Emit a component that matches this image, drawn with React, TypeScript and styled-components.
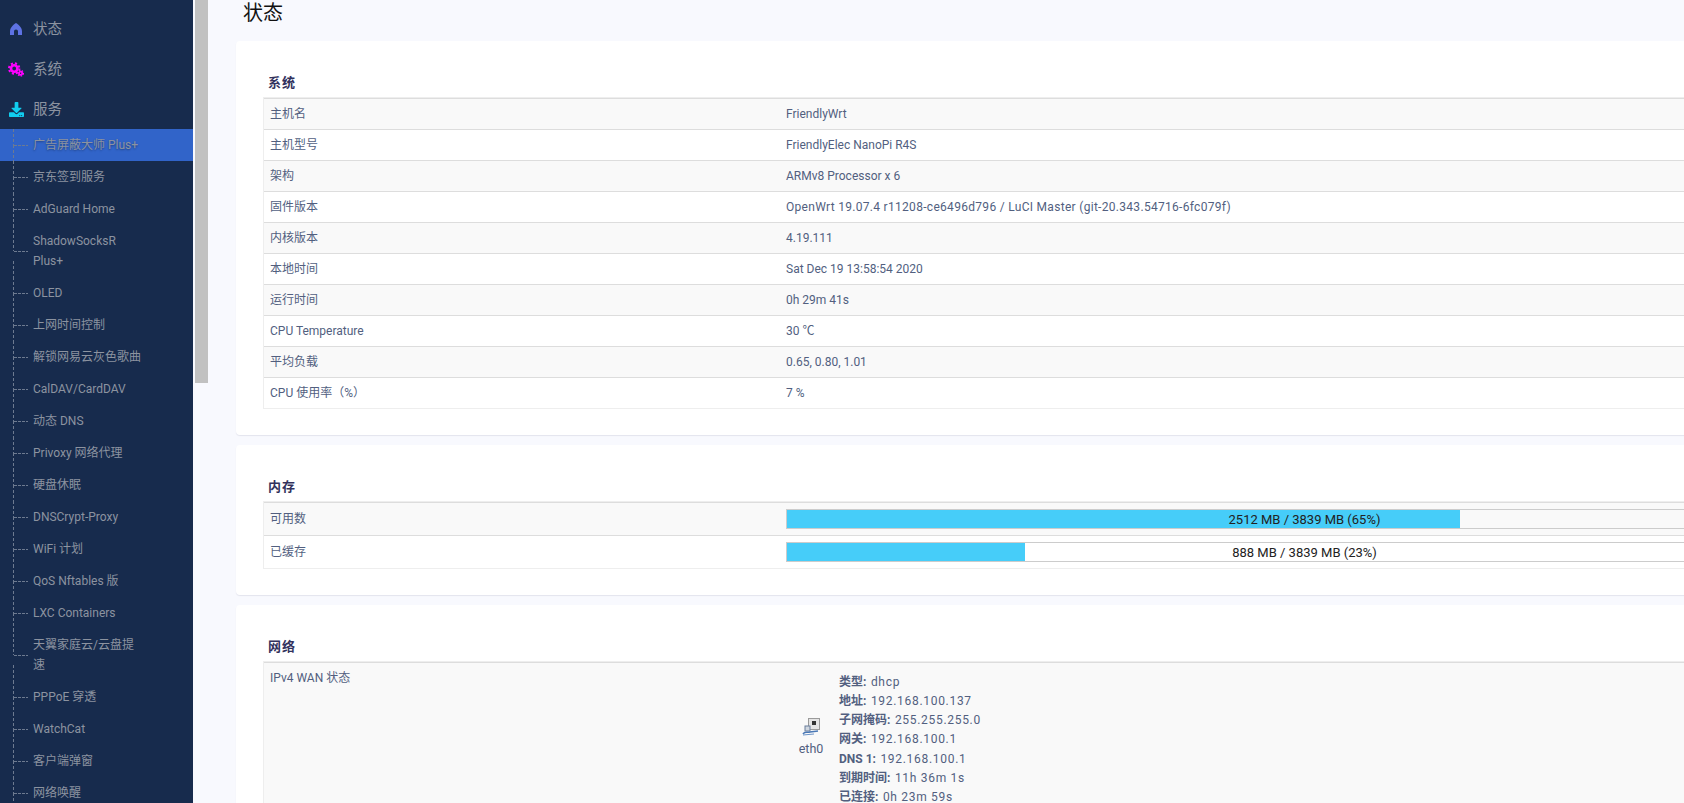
import styled, { createGlobalStyle } from "styled-components";
import { FaDownload } from "react-icons/fa";

const fontStack = `Roboto, "Noto Sans CJK SC", sans-serif`;

const GlobalStyle = createGlobalStyle`
    html, body {
        margin: 0;
        padding: 0;
        overflow: hidden;
        background: #f8f9fe;
    }
`;

const Page = styled.div`
    width: 1684px;
    height: 803px;
    display: flex;
    overflow: hidden;
    font-family: ${fontStack};
    font-size: 12px;
    color: #525f7f;
`;

const Sidebar = styled.nav`
    flex: 0 0 193px;
    box-sizing: border-box;
    padding-top: 9px;
    background: #172b4d;
    overflow: hidden;
`;

const TopItem = styled.div`
    height: 40px;
    display: flex;
    align-items: center;
    padding-left: 8px;
    font-size: 14.5px;
    color: #8c93a0;
`;

const TopIcon = styled.span<{ $color: string }>`
    width: 16px;
    height: 16px;
    margin-right: 9px;
    display: flex;
    align-items: center;
    justify-content: center;
    color: ${props => props.$color};
`;

const TopLabel = styled.span`
    padding-bottom: 3px;
`;

const SubItem = styled.div<{ $active?: boolean }>`
    position: relative;
    box-sizing: border-box;
    padding: 6px 50px 6px 33px;
    line-height: 20px;
    color: #8c93a0;
    background-color: ${props => (props.$active ? "#3164c9" : "transparent")};
    ${props => props.$active && "text-shadow: 0 1px 2px rgba(0, 0, 0, 0.35);"}
    background-image: repeating-linear-gradient(to bottom, #6d7a90 0 3px, transparent 3px 5px);
    background-size: 1px 16px;
    background-position: 13px bottom;
    background-repeat: no-repeat;

    &::before {
        content: "";
        position: absolute;
        left: 13px;
        top: 0;
        width: 1px;
        height: 50%;
        background: repeating-linear-gradient(to bottom, #6d7a90 0 3px, transparent 3px 5px);
    }

    &::after {
        content: "";
        position: absolute;
        left: 14px;
        top: 50%;
        width: 14px;
        height: 1px;
        background: repeating-linear-gradient(to right, #6d7a90 0 3px, transparent 3px 4px);
    }
`;

const ScrollRail = styled.div`
    flex: 0 0 15px;
    box-sizing: border-box;
    padding-left: 2px;
    background: #f8f9fe;
`;

const ScrollThumb = styled.div`
    width: 13px;
    height: 383px;
    background: #c1c1c1;
`;

const Main = styled.main`
    flex: 0 0 auto;
    width: 1645px;
    box-sizing: border-box;
    padding-left: 28px;
`;

const Title = styled.h2`
    margin: 0;
    height: 41px;
    padding-left: 7px;
    box-sizing: border-box;
    font-size: 20px;
    line-height: 26px;
    font-weight: 400;
    color: #111;
`;

const Card = styled.section`
    width: 1617px;
    box-sizing: border-box;
    margin-bottom: 10px;
    padding: 32px 27px 26px;
    background: #fff;
    border-radius: 4px;
    box-shadow: 0 1px 1px rgba(50, 50, 93, 0.1);
`;

const Legend = styled.h3`
    margin: 0 0 4px 5px;
    font-size: 13px;
    line-height: 20px;
    font-weight: 700;
    letter-spacing: 1px;
    color: #32325d;
`;

const Table = styled.div`
    width: 1563px;
    border-top: 1px solid #eee;
    border-left: 1px solid #eee;
    border-bottom: 1px solid #eee;
`;

const Row = styled.div<{ $height: number; $stripe?: boolean }>`
    display: flex;
    box-sizing: border-box;
    min-height: ${props => props.$height}px;
    align-items: center;
    border-top: 1px solid #ddd;
    line-height: 16px;
    background: ${props => (props.$stripe ? "#f9f9f9" : "#fff")};
`;

const Label = styled.div`
    flex: 0 0 522px;
    box-sizing: border-box;
    padding-left: 6px;
`;

const Value = styled.div<{ $spacing?: number }>`
    flex: 1;
    min-width: 0;
    letter-spacing: ${props => props.$spacing ?? 0}px;
`;

const BarCell = styled.div`
    flex: 1;
    min-width: 0;
`;

const BarTrack = styled.div`
    position: relative;
    width: 1037px;
    height: 20px;
    box-sizing: border-box;
    border: 1px solid #ccc;
    font-size: 13px;
    line-height: 19px;
    text-align: center;
    color: #222;
`;

const BarFill = styled.div`
    position: absolute;
    left: 0;
    top: 0;
    bottom: 0;
    background: #46cdf9;
`;

const BarText = styled.span`
    position: relative;
`;

const NetworkRow = styled.div`
    display: flex;
    min-height: 220px;
    border-top: 1px solid #ddd;
    background: #f9f9f9;
`;

const NetworkLabel = styled(Label)`
    padding-top: 7px;
    line-height: 16px;
`;

const Interface = styled.div`
    flex: 0 0 50px;
    height: 130px;
    margin-top: 9px;
    display: flex;
    flex-direction: column;
    align-items: center;
    justify-content: center;
    gap: 5px;
    font-size: 12.5px;
    line-height: 16px;
`;

const NetworkInfo = styled.div`
    margin: 10px 0 0 3px;
    line-height: 19.15px;
`;

const InfoLine = styled.div``;

const InfoValue = styled.span`
    margin-left: 1.5px;
    letter-spacing: 0.7px;
`;

const sideItems = [
    "广告屏蔽大师 Plus+",
    "京东签到服务",
    "AdGuard Home",
    "ShadowSocksR Plus+",
    "OLED",
    "上网时间控制",
    "解锁网易云灰色歌曲",
    "CalDAV/CardDAV",
    "动态 DNS",
    "Privoxy 网络代理",
    "硬盘休眠",
    "DNSCrypt-Proxy",
    "WiFi 计划",
    "QoS Nftables 版",
    "LXC Containers",
    "天翼家庭云/云盘提速",
    "PPPoE 穿透",
    "WatchCat",
    "客户端弹窗",
    "网络唤醒",
];

const systemRows = [
    { name: "主机名", value: "FriendlyWrt" },
    { name: "主机型号", value: "FriendlyElec NanoPi R4S" },
    { name: "架构", value: "ARMv8 Processor x 6" },
    { name: "固件版本", value: "OpenWrt 19.07.4 r11208-ce6496d796 / LuCI Master (git-20.343.54716-6fc079f)", spacing: 0.3 },
    { name: "内核版本", value: "4.19.111" },
    { name: "本地时间", value: "Sat Dec 19 13:58:54 2020" },
    { name: "运行时间", value: "0h 29m 41s" },
    { name: "CPU Temperature", value: "30 ℃" },
    { name: "平均负载", value: "0.65, 0.80, 1.01" },
    { name: "CPU 使用率（%）", value: "7 %" },
];

const memoryRows = [
    { name: "可用数", text: "2512 MB / 3839 MB (65%)", percent: 65 },
    { name: "已缓存", text: "888 MB / 3839 MB (23%)", percent: 23 },
];

const networkInfo = [
    ["类型", "dhcp"],
    ["地址", "192.168.100.137"],
    ["子网掩码", "255.255.255.0"],
    ["网关", "192.168.100.1"],
    ["DNS 1", "192.168.100.1"],
    ["到期时间", "11h 36m 1s"],
    ["已连接", "0h 23m 59s"],
];

function HomeIcon() {
    return (
        <svg width="12" height="12" viewBox="0 0 12 12" fill="currentColor">
            <path d="M6 0 C7.5 1 9.5 2.6 10.6 4.2 C11.6 5.6 12 7 12 8.6 L12 12 L8 12 L8 8.6 C8 7.4 7.2 6.6 6 6.6 C4.8 6.6 4 7.4 4 8.6 L4 12 L0 12 L0 8.6 C0 7 0.4 5.6 1.4 4.2 C2.5 2.6 4.5 1 6 0 Z" />
        </svg>
    );
}

function GearsIcon() {
    return (
        <svg width="16" height="15" viewBox="0 0 16 15" fill="none" stroke="currentColor">
            <circle cx="6.2" cy="6.5" r="3.2" strokeWidth="2.6" />
            <circle cx="6.2" cy="6.5" r="5.2" strokeWidth="2" strokeDasharray="2.1 2" />
            <circle cx="12.6" cy="11.2" r="1.6" strokeWidth="1.8" />
            <circle cx="12.6" cy="11.2" r="2.8" strokeWidth="1.4" strokeDasharray="1.4 1.4" />
        </svg>
    );
}

function NicIcon() {
    return (
        <svg width="18" height="18" viewBox="0 0 18 18">
            <rect x="6.5" y="0.5" width="11" height="11" fill="#e4e4e4" stroke="#9a9a9a" />
            <rect x="10" y="3" width="4" height="4" fill="#333" />
            <rect x="3" y="8" width="5" height="5" fill="#cfd6df" stroke="#6b7f9c" />
            <path d="M1 16 C3 13 5 15 8 14 L16 13" fill="none" stroke="#4a78b5" strokeWidth="1.6" />
            <path d="M1 17 L12 16" fill="none" stroke="#6d94c8" strokeWidth="1" />
        </svg>
    );
}

export default function App() {
    return (
        <Page>
            <GlobalStyle />
            <Sidebar>
                <TopItem>
                    <TopIcon $color="#5e72e4"><HomeIcon /></TopIcon>
                    <TopLabel>状态</TopLabel>
                </TopItem>
                <TopItem>
                    <TopIcon $color="#f0f"><GearsIcon /></TopIcon>
                    <TopLabel>系统</TopLabel>
                </TopItem>
                <TopItem>
                    <TopIcon $color="#11cdef"><FaDownload size={15} /></TopIcon>
                    <TopLabel>服务</TopLabel>
                </TopItem>
                {sideItems.map((item, i) => (
                    <SubItem key={item} $active={i === 0}>{item}</SubItem>
                ))}
            </Sidebar>
            <ScrollRail>
                <ScrollThumb />
            </ScrollRail>
            <Main>
                <Title>状态</Title>
                <Card>
                    <Legend>系统</Legend>
                    <Table>
                        {systemRows.map((row, i) => (
                            <Row key={row.name} $height={31} $stripe={i % 2 === 0}>
                                <Label>{row.name}</Label>
                                <Value $spacing={row.spacing}>{row.value}</Value>
                            </Row>
                        ))}
                    </Table>
                </Card>
                <Card>
                    <Legend>内存</Legend>
                    <Table>
                        {memoryRows.map((row, i) => (
                            <Row key={row.name} $height={33} $stripe={i % 2 === 0}>
                                <Label>{row.name}</Label>
                                <BarCell>
                                    <BarTrack>
                                        <BarFill style={{ width: `${row.percent}%` }} />
                                        <BarText>{row.text}</BarText>
                                    </BarTrack>
                                </BarCell>
                            </Row>
                        ))}
                    </Table>
                </Card>
                <Card>
                    <Legend>网络</Legend>
                    <Table>
                        <NetworkRow>
                            <NetworkLabel>IPv4 WAN 状态</NetworkLabel>
                            <Interface>
                                <NicIcon />
                                <span>eth0</span>
                            </Interface>
                            <NetworkInfo>
                                {networkInfo.map(line => (
                                    <InfoLine key={line[0]}>
                                        <strong>{line[0]}:</strong> <InfoValue>{line[1]}</InfoValue>
                                    </InfoLine>
                                ))}
                            </NetworkInfo>
                        </NetworkRow>
                    </Table>
                </Card>
            </Main>
        </Page>
    );
}
